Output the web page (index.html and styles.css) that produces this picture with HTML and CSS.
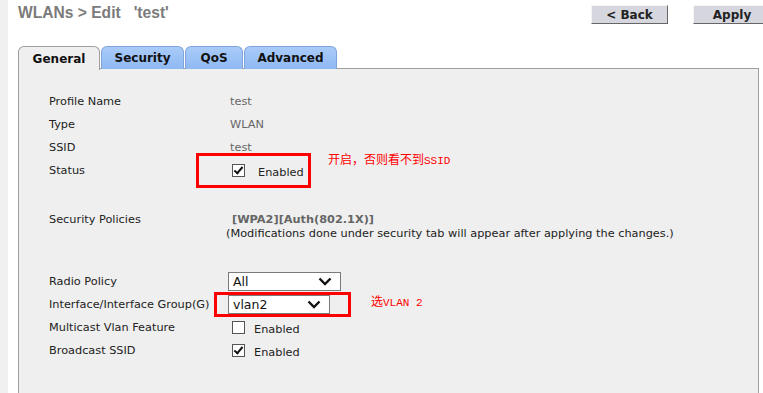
FILE: index.html
```html
<html lang="en">
<head>
    <meta charset="UTF-8">
    <title>WLANs &gt; Edit</title>
    <link rel="stylesheet" href="styles.css">
</head>
<body>
    <div class="page">
        <div class="side"></div>
        <div class="main">
            <div class="header">
                <h1>WLANs &gt; Edit&nbsp;&nbsp; 'test'</h1>
                <div class="actions">
                    <button class="btn back">&lt; Back</button>
                    <button class="btn apply">Apply</button>
                </div>
            </div>

            <div class="tabs">
                <a class="tab active" href="#">General</a>
                <a class="tab" href="#">Security</a>
                <a class="tab" href="#">QoS</a>
                <a class="tab" href="#">Advanced</a>
            </div>

            <div class="panel">
                <div class="rows">
                    <div class="row"><span class="label">Profile Name</span><span class="value">test</span></div>
                    <div class="row"><span class="label">Type</span><span class="value">WLAN</span></div>
                    <div class="row"><span class="label">SSID</span><span class="value">test</span></div>
                    <div class="row"><span class="label">Status</span>
                        <span class="value check-wrap wide"><span class="check on"></span>Enabled</span>
                    </div>
                </div>

                <div class="rows policies">
                    <div class="row"><span class="label">Security Policies</span><span class="value strong">[WPA2][Auth(802.1X)]</span></div>
                    <div class="note">(Modifications done under security tab will appear after applying the changes.)</div>
                </div>

                <div class="rows">
                    <div class="row"><span class="label">Radio Policy</span>
                        <span class="select wide-select">All
                            <svg width="14" height="9" viewBox="0 0 14 9"><path d="M1.5 1.5 L7 7 L12.5 1.5" fill="none" stroke="#111" stroke-width="2.4"/></svg>
                        </span>
                    </div>
                    <div class="row"><span class="label">Interface/Interface Group(G)</span>
                        <span class="select">vlan2
                            <svg width="14" height="9" viewBox="0 0 14 9"><path d="M1.5 1.5 L7 7 L12.5 1.5" fill="none" stroke="#111" stroke-width="2.4"/></svg>
                        </span>
                    </div>
                    <div class="row"><span class="label">Multicast Vlan Feature</span>
                        <span class="value check-wrap"><span class="check"></span>Enabled</span>
                    </div>
                    <div class="row"><span class="label">Broadcast SSID</span>
                        <span class="value check-wrap"><span class="check on"></span>Enabled</span>
                    </div>
                </div>

                <!-- annotations drawn over the form -->
                <div class="mark mark-status"></div>
                <div class="hint hint-status">开启，否则看不到<span class="mono">SSID</span></div>
                <div class="mark mark-iface"></div>
                <div class="hint hint-iface">选<span class="mono">VLAN 2</span></div>
            </div>
        </div>
    </div>
</body>
</html>
```

FILE: styles.css
```css
* {
    margin: 0;
    padding: 0;
    box-sizing: border-box;
}

body {
    background-color: #fff;
    font-family: 'DejaVu Sans', Verdana, sans-serif;
    font-size: 11.3px;
    color: #222;
    overflow: hidden;
}

.page {
    display: flex;
    height: 393px;
}

.side {
    width: 8px;
    background-color: #f0f0f0;
}

.main {
    flex: 1;
    padding-left: 10px;
    padding-right: 4px;
}

.header {
    display: flex;
    justify-content: space-between;
    height: 46px;
}

.header h1 {
    font-family: 'Liberation Sans', Arial, sans-serif;
    font-size: 15.6px;
    font-weight: bold;
    color: #7b7b7b;
    padding-top: 4px;
    white-space: pre;
}

.actions {
    display: flex;
    gap: 25px;
    padding-top: 5px;
    margin-right: -12px;
}

.btn {
    height: 19px;
    font-family: 'DejaVu Sans', Verdana, sans-serif;
    font-size: 12px;
    font-weight: bold;
    color: #222;
    background-color: #d5d6de;
    border: 1px solid;
    border-color: #f4f4f4 #666 #666 #f4f4f4;
    cursor: pointer;
}

.back {
    width: 77px;
}

.apply {
    width: 78px;
}

.tabs {
    display: flex;
    gap: 1px;
    height: 22px;
    position: relative;
    z-index: 1;
}

.tab {
    display: flex;
    align-items: center;
    justify-content: center;
    height: 23px;
    font-size: 12px;
    font-weight: bold;
    color: #111;
    text-decoration: none;
    background: linear-gradient(#a9cbf8, #8fb9f3);
    border: 1px solid #7ea4dc;
    border-bottom: none;
    border-radius: 6px 6px 0 0;
}

.tab:nth-child(1) { width: 82px; }
.tab:nth-child(2) { width: 83px; }
.tab:nth-child(3) { width: 58px; }
.tab:nth-child(4) { width: 93px; }

.tab.active {
    background: #efefef;
    border-color: #a0a0a0;
    height: 24px;
}

.panel {
    position: relative;
    height: 340px;
    background-color: #efefef;
    border: 1px solid #a0a0a0;
    padding: 21px 0 0 30px;
}

.rows {
    display: flex;
    flex-direction: column;
}

.row {
    display: flex;
    align-items: center;
    height: 23px;
}

.label {
    width: 181px;
    color: #222;
}

.value {
    color: #666;
}

.value.strong {
    font-weight: bold;
    padding-left: 2px;
}

.policies {
    margin-top: 26px;
}

.note {
    padding-left: 177px;
    margin-top: -4px;
    color: #222;
}

.policies + .rows {
    margin-top: 30px;
}

.check-wrap {
    display: flex;
    align-items: center;
    gap: 9px;
    padding-left: 2px;
    color: #222;
    position: relative;
    top: 2px;
}

.check-wrap.wide {
    gap: 13px;
}

.check {
    position: relative;
    top: -2px;
    width: 13px;
    height: 13px;
    background-color: #fff;
    border: 1px solid #555;
}

.check.on::after {
    content: '';
    position: absolute;
    left: 3px;
    top: 0px;
    width: 3px;
    height: 7px;
    border: solid #111;
    border-width: 0 2px 2px 0;
    transform: rotate(40deg);
}

.select {
    display: flex;
    align-items: center;
    justify-content: space-between;
    width: 102px;
    height: 19px;
    margin-left: -2px;
    padding: 0 8px 0 4px;
    background-color: #fff;
    border: 1px solid #7a7a7a;
    font-size: 12.5px;
    color: #111;
}

.wide-select {
    width: 113px;
}

.mark {
    position: absolute;
    border: 3px solid #f00;
}

.mark-status {
    left: 177px;
    top: 84px;
    width: 115px;
    height: 35px;
}

.mark-iface {
    left: 195px;
    top: 223px;
    width: 137px;
    height: 25px;
}

.hint {
    position: absolute;
    color: #f00;
    font-size: 12px;
    font-family: 'Noto Sans CJK SC', sans-serif;
    white-space: nowrap;
}

.mono {
    font-family: 'Liberation Mono', monospace;
    font-size: 11px;
}

.hint-status {
    left: 309px;
    top: 81px;
}

.hint-iface {
    left: 352px;
    top: 223px;
}
```
